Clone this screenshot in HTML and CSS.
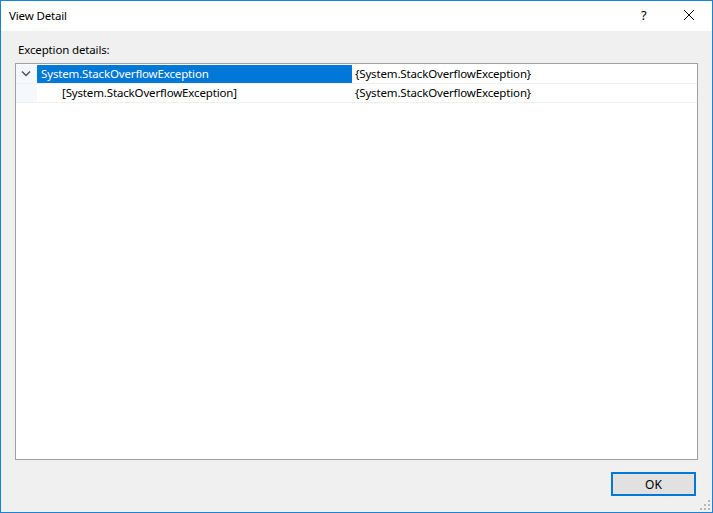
FILE: index.html
```html
<!DOCTYPE html>
<html>
<head>
<meta charset="utf-8">
<link rel="stylesheet" href="styles.css">
</head>
<body>
<div class="window">
  <div class="titlebar">
    <div class="title">View Detail</div>
    <div class="help">?</div>
    <div class="close">
      <svg width="12" height="12" viewBox="0 0 12 12"><path d="M1 1L11 11M11 1L1 11" stroke="#000" stroke-width="1" fill="none"/></svg>
    </div>
  </div>
  <div class="content">
    <div class="label">Exception details:</div>
    <div class="list">
      <div class="row">
        <div class="gutter">
          <svg width="10" height="6" viewBox="0 0 10 6"><path d="M1 0.5L5 4.5L9 0.5" stroke="#505050" stroke-width="1.4" fill="none"/></svg>
        </div>
        <div class="name selected">System.StackOverflowException</div>
        <div class="value">{System.StackOverflowException}</div>
      </div>
      <div class="row">
        <div class="gutter"></div>
        <div class="name indent">[System.StackOverflowException]</div>
        <div class="value">{System.StackOverflowException}</div>
      </div>
    </div>
    <div class="footer">
      <button class="ok">OK</button>
    </div>
    <svg class="grip" width="10" height="10" viewBox="0 0 10 10">
      <rect x="8" y="0" width="2" height="2" fill="#b8b8b8"/>
      <rect x="4" y="4" width="2" height="2" fill="#b8b8b8"/>
      <rect x="8" y="4" width="2" height="2" fill="#b8b8b8"/>
      <rect x="0" y="8" width="2" height="2" fill="#b8b8b8"/>
      <rect x="4" y="8" width="2" height="2" fill="#b8b8b8"/>
      <rect x="8" y="8" width="2" height="2" fill="#b8b8b8"/>
    </svg>
  </div>
</div>
</body>
</html>
```
FILE: styles.css
```css
html, body {
  margin: 0;
  padding: 0;
}
body {
  font-family: "Noto Sans", "Liberation Sans", sans-serif;
  font-size: 11.5px;
  letter-spacing: -0.15px;
  color: #000;
}
.window {
  width: 713px;
  height: 513px;
  box-sizing: border-box;
  border: 1px solid #1883d7;
  display: flex;
  flex-direction: column;
  background: #f0f0f0;
}
.titlebar {
  height: 30px;
  background: #fff;
  display: flex;
  align-items: center;
  flex-shrink: 0;
}
.title {
  padding-left: 8px;
  flex: 1;
  line-height: 16px;
  margin-top: -1px;
}
.help {
  width: 10px;
  padding-left: 3px;
  margin-right: 32px;
  font-size: 13px;
  margin-top: -2px;
}
.close {
  width: 12px;
  height: 12px;
  margin-right: 17px;
  margin-top: -2px;
}
.close svg {
  display: block;
}
.content {
  flex: 1;
  display: flex;
  flex-direction: column;
  position: relative;
}
.label {
  padding: 11px 0 0 17px;
  height: 32px;
  line-height: 16px;
  box-sizing: border-box;
  flex-shrink: 0;
}
.list {
  margin: 0 14px;
  height: 397px;
  flex-shrink: 0;
  box-sizing: border-box;
  border: 1px solid #a0a0a0;
  background: #fff;
  padding-top: 1px;
}
.row {
  display: flex;
  height: 19px;
  box-sizing: border-box;
  border-bottom: 1px solid #f0f0f0;
}
.gutter {
  width: 21px;
  flex-shrink: 0;
  background: #f5f8fc;
  display: flex;
  align-items: center;
  justify-content: center;
  padding-right: 2px;
  box-sizing: border-box;
}
.gutter svg {
  display: block;
  margin-top: -1px;
}
.name {
  width: 315px;
  flex-shrink: 0;
  line-height: 18px;
  padding-left: 4px;
  box-sizing: border-box;
  white-space: nowrap;
}
.name.selected {
  background: #0078d7;
  color: #fff;
}
.name.indent {
  padding-left: 25px;
}
.value {
  flex: 1;
  padding-left: 3px;
  line-height: 18px;
  white-space: nowrap;
}
.footer {
  display: flex;
  justify-content: flex-end;
  padding: 12px 16px 0 0;
}
.ok {
  width: 85px;
  height: 24px;
  box-sizing: border-box;
  border: 2px solid #0078d7;
  background: #e1e1e1;
  font-family: "Noto Sans", "Liberation Sans", sans-serif;
  font-size: 12px;
  color: #000;
  padding: 0;
  margin: 0;
}
.grip {
  position: absolute;
  right: 2px;
  bottom: 2px;
}
```
